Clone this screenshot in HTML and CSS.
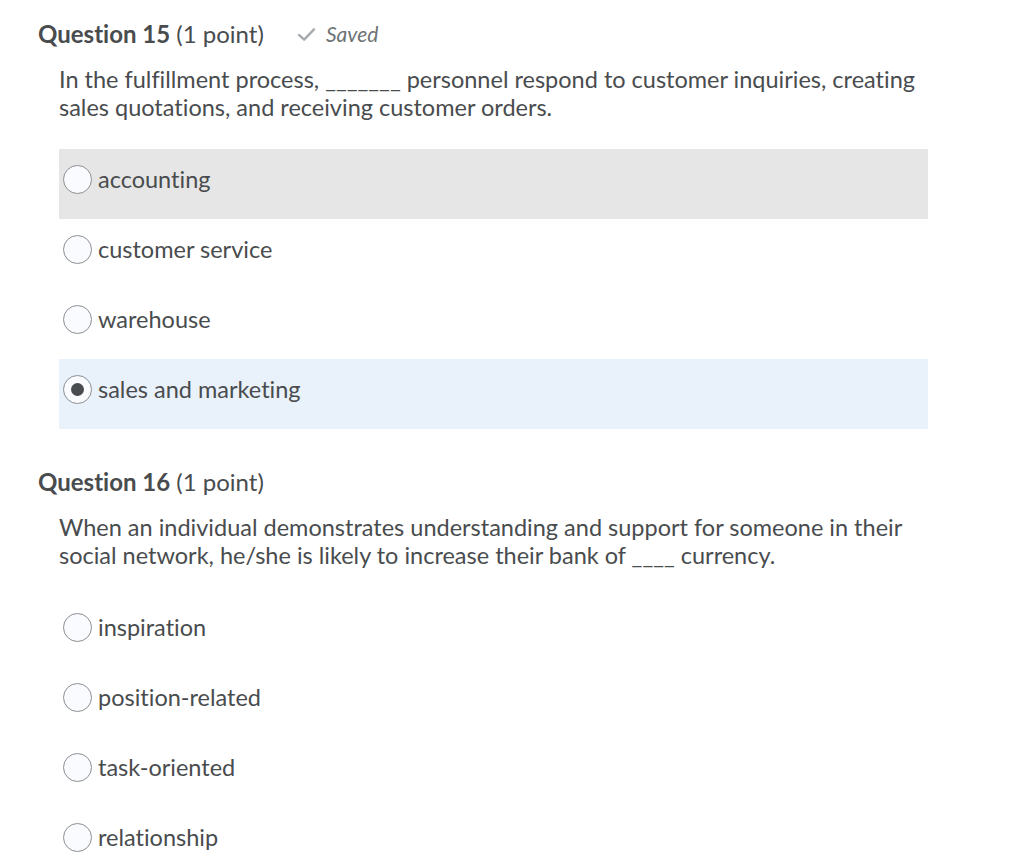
FILE: index.html
```html
<!DOCTYPE html>
<html lang="en">
<head>
<meta charset="utf-8">
<title>Quiz</title>
<link rel="stylesheet" href="styles.css">
</head>
<body>
<main class="quiz">
  <section class="question">
    <h2 class="q-head"><span class="q-num">Question 15</span> (1 point) <span class="saved"><svg class="check" viewBox="0 0 20 16" width="19" height="15"><path d="M2 8.5 L7.5 13.5 L18 2.5" fill="none" stroke="#a8acaf" stroke-width="2.6" stroke-linecap="round" stroke-linejoin="round"/></svg><em>Saved</em></span></h2>
    <p class="q-text">In the fulfillment process, _______ personnel respond to customer inquiries, creating sales quotations, and receiving customer orders.</p>
    <div class="options">
      <label class="opt hover"><span class="radio"></span><span class="opt-label">accounting</span></label>
      <label class="opt"><span class="radio"></span><span class="opt-label">customer service</span></label>
      <label class="opt"><span class="radio"></span><span class="opt-label">warehouse</span></label>
      <label class="opt selected"><span class="radio checked"></span><span class="opt-label">sales and marketing</span></label>
    </div>
  </section>
  <section class="question second">
    <h2 class="q-head"><span class="q-num">Question 16</span> (1 point)</h2>
    <p class="q-text">When an individual demonstrates understanding and support for someone in their social network, he/she is likely to increase their bank of ____ currency.</p>
    <div class="options">
      <label class="opt"><span class="radio"></span><span class="opt-label">inspiration</span></label>
      <label class="opt"><span class="radio"></span><span class="opt-label">position-related</span></label>
      <label class="opt"><span class="radio"></span><span class="opt-label">task-oriented</span></label>
      <label class="opt"><span class="radio"></span><span class="opt-label">relationship</span></label>
    </div>
  </section>
</main>
</body>
</html>
```

FILE: styles.css
```css
html, body {
  margin: 0;
  padding: 0;
  background: #ffffff;
}
body {
  font-family: Lato, "Open Sans", "Liberation Sans", sans-serif;
  color: #494c4e;
  font-variant-ligatures: none;
}
.quiz {
  padding: 20px 0 0 38px;
  width: 890px;
}
.question.second {
  margin-top: 39px;
}
.q-head {
  margin: 0;
  font-size: 24px;
  line-height: 28px;
  font-weight: 400;
  display: flex;
  align-items: center;
  white-space: pre;
}
.q-num {
  font-weight: 700;
}
.saved {
  display: inline-flex;
  align-items: center;
  margin-left: 27px;
  font-size: 21px;
  color: #6e7376;
}
.check {
  margin-right: 10px;
}
.saved em {
  font-style: italic;
}
.q-text {
  margin: 17px 0 0 21px;
  font-size: 23.5px;
  line-height: 28px;
  width: 870px;
}
.options {
  margin: 28px 0 0 21px;
  display: flex;
  flex-direction: column;
}
.opt {
  height: 70px;
  box-sizing: border-box;
  padding: 16px 0 0 4px;
  display: flex;
  align-items: flex-start;
  font-size: 23.5px;
  line-height: 28px;
}
.opt.hover {
  background: #e6e6e6;
}
.opt.selected {
  background: #e9f1fb;
}
.radio {
  width: 29px;
  height: 29px;
  box-sizing: border-box;
  border: 1px solid #8c8f91;
  border-radius: 50%;
  background: #f9fbff;
  margin-right: 6px;
  display: flex;
  align-items: center;
  justify-content: center;
  flex: none;
}
.radio.checked::after {
  content: "";
  width: 13px;
  height: 13px;
  border-radius: 50%;
  background: #494c4e;
}
```
